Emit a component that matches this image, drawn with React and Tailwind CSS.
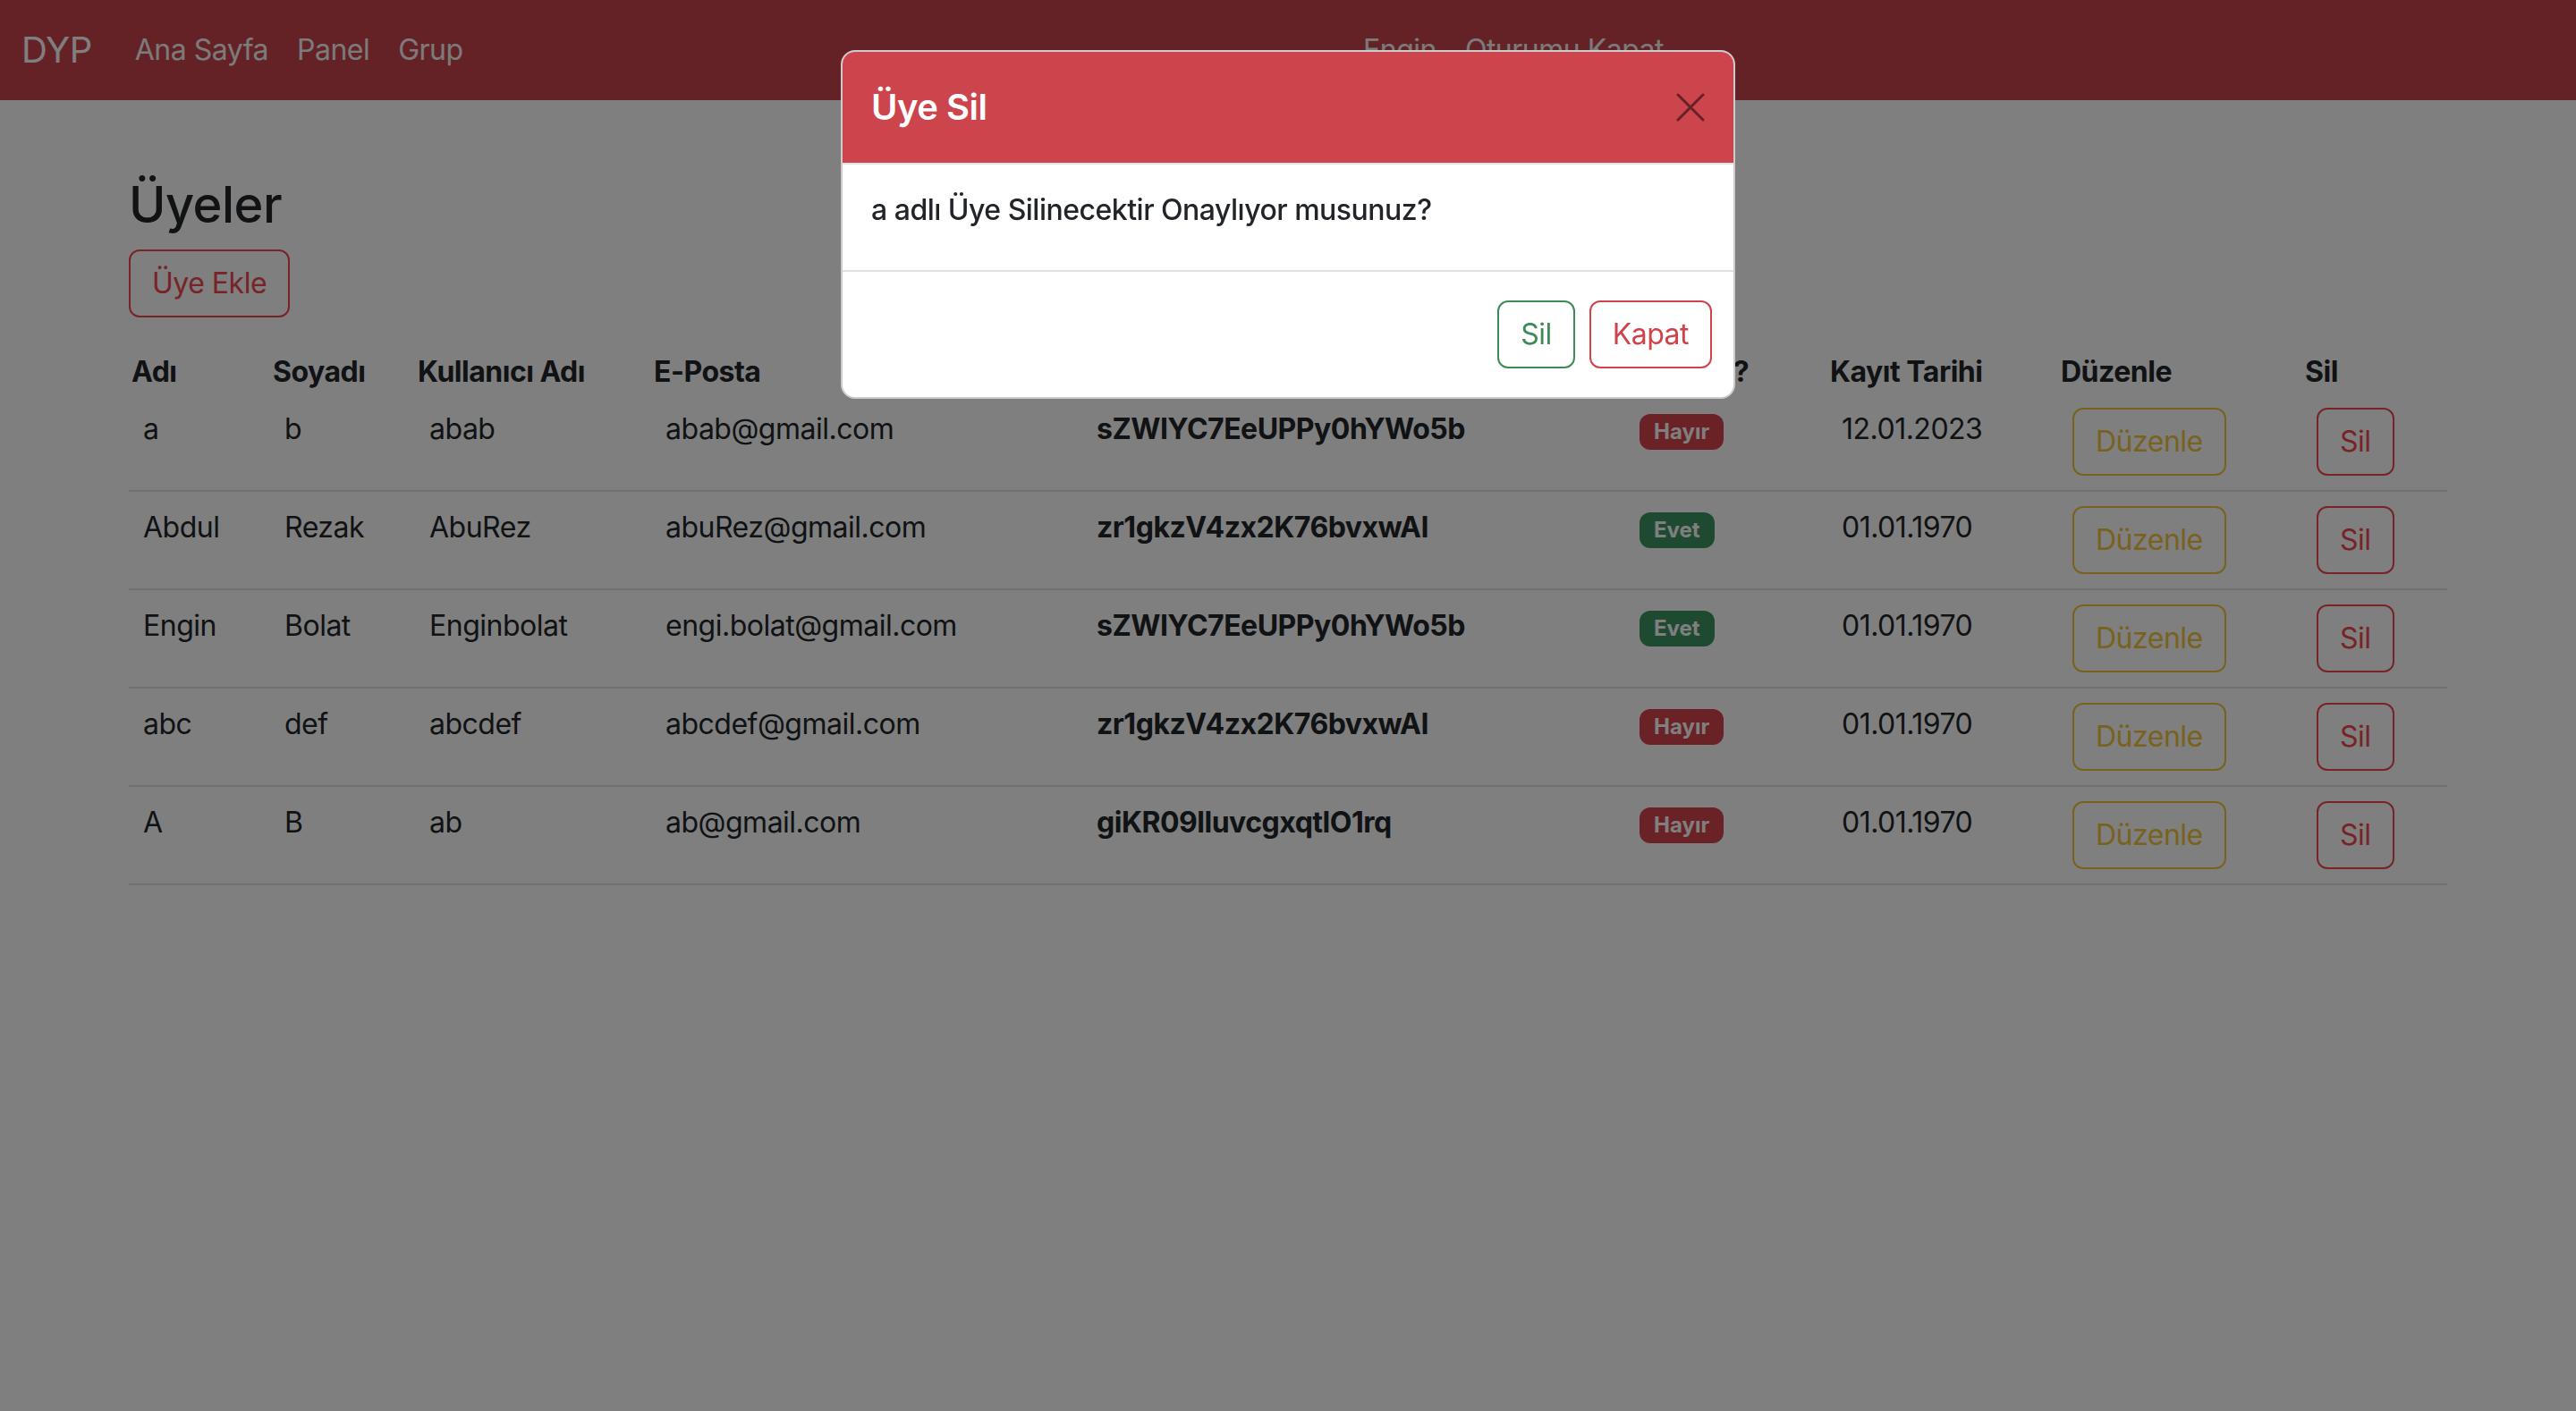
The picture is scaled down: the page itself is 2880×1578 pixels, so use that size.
import React from "react";

const rows = [
  ["a", "b", "abab", "abab@gmail.com", "sZWIYC7EeUPPy0hYWo5b", false, "12.01.2023"],
  ["Abdul", "Rezak", "AbuRez", "abuRez@gmail.com", "zr1gkzV4zx2K76bvxwAI", true, "01.01.1970"],
  ["Engin", "Bolat", "Enginbolat", "engi.bolat@gmail.com", "sZWIYC7EeUPPy0hYWo5b", true, "01.01.1970"],
  ["abc", "def", "abcdef", "abcdef@gmail.com", "zr1gkzV4zx2K76bvxwAI", false, "01.01.1970"],
  ["A", "B", "ab", "ab@gmail.com", "giKR09lluvcgxqtlO1rq", false, "01.01.1970"],
];

const headers = [
  ["Adı", "w-[158px]"],
  ["Soyadı", "w-[162px]"],
  ["Kullanıcı Adı", "w-[264px]"],
  ["E-Posta", "w-[482px]"],
  ["Şifre", "w-[607px]"],
  ["Aktif Mi?", "w-[226px]"],
  ["Kayıt Tarihi", "w-[258px]"],
  ["Düzenle", "w-[273px]"],
  ["Sil", "w-[162px]"],
];

export default function App() {
  return (
    <div className="relative min-h-[1578px] bg-white font-[Inter,sans-serif] tracking-[-0.5px] text-[#212529]">
      {/* Navbar */}
      <nav className="flex h-[112px] items-center bg-[#ca444c] px-[24px]">
        <div className="flex w-[1484px] items-center">
          <span className="mr-[32px] text-[40px] leading-[60px] text-white">DYP</span>
          <span className="px-[16px] text-[32px] leading-[48px] text-[#f6f6f6]">Ana Sayfa</span>
          <span className="px-[16px] text-[32px] leading-[48px] text-[#f6f6f6]">Panel</span>
          <span className="px-[16px] text-[32px] leading-[48px] text-[#f6f6f6]">Grup</span>
        </div>
        <div className="flex items-center">
          <span className="px-[16px] text-[32px] leading-[48px] text-[#f6f6f6]">Engin</span>
          <span className="px-[16px] text-[32px] leading-[48px] text-[#f6f6f6]">Oturumu Kapat</span>
        </div>
      </nav>

      {/* Content */}
      <main className="px-[144px] pt-[84px]">
        <h3 className="mb-[16px] text-[56px] font-medium leading-[67px]">Üyeler</h3>
        <button className="rounded-[12px] border-2 border-[#ef4650] px-[24px] py-[12px] text-[32px] leading-[48px] text-[#ef4650]">
          Üye Ekle
        </button>

        <table className="mt-[37px] w-[2592px] table-fixed border-collapse text-[32px] leading-[48px]">
          <thead>
            <tr>
              {headers.map(([h, w]) => (
                <th key={h} className={`${w} h-[48px] p-0 pl-[3px] text-left align-top font-bold`}>
                  {h}
                </th>
              ))}
            </tr>
          </thead>
          <tbody>
            {rows.map((r, i) => (
              <tr key={i} className="border-b-2 border-[#dee2e6]">
                <td className="px-[16px] py-[16px] align-top">{r[0]}</td>
                <td className="px-[16px] py-[16px] align-top">{r[1]}</td>
                <td className="px-[16px] py-[16px] align-top">{r[2]}</td>
                <td className="px-[16px] py-[16px] align-top">{r[3]}</td>
                <td className="px-[16px] py-[16px] align-top font-bold">{r[4]}</td>
                <td className="px-[16px] py-[16px] align-top">
                  {r[5] ? (
                    <span className="inline-block rounded-[12px] bg-[#3e9464] px-[16px] py-[8px] text-[24px] font-bold leading-[24px] tracking-normal text-white">
                      Evet
                    </span>
                  ) : (
                    <span className="inline-block rounded-[12px] bg-[#d4444c] px-[16px] py-[8px] text-[24px] font-bold leading-[24px] tracking-normal text-white">
                      Hayır
                    </span>
                  )}
                </td>
                <td className="px-[16px] py-[16px] align-top">{r[6]}</td>
                <td className="px-[16px] py-[16px] align-top">
                  <button className="rounded-[12px] border-2 border-[#f2c23c] px-[24px] py-[12px] text-[32px] leading-[48px] text-[#f2c23c]">
                    Düzenle
                  </button>
                </td>
                <td className="px-[16px] py-[16px] align-top">
                  <button className="rounded-[12px] border-2 border-[#ef4650] px-[24px] py-[12px] text-[32px] leading-[48px] text-[#ef4650]">
                    Sil
                  </button>
                </td>
              </tr>
            ))}
          </tbody>
        </table>
      </main>

      {/* Backdrop */}
      <div className="fixed inset-0 bg-black/50" />

      {/* Modal */}
      <div className="absolute left-[940px] top-[56px] w-[1000px] overflow-hidden rounded-[16px] border-2 border-black/20 bg-white">
        <div className="flex items-center justify-between border-b-2 border-[#dee2e6] bg-[#cc444c] p-[32px]">
          <h5 className="text-[40px] font-semibold leading-[60px] text-white">Üye Sil</h5>
          <button className="flex h-[60px] w-[32px] items-center justify-center">
            <svg width="32" height="32" viewBox="0 0 32 32" fill="none">
              <path d="M2 2L30 30M30 2L2 30" stroke="#652226" strokeWidth="3" strokeLinecap="round" />
            </svg>
          </button>
        </div>
        <div className="p-[32px]">
          <h6 className="mb-[16px] text-[32px] font-medium leading-[38.4px]">
            a adlı Üye Silinecektir Onaylıyor musunuz?
          </h6>
        </div>
        <div className="flex items-center justify-end gap-[16px] border-t-2 border-[#dee2e6] px-[24px] py-[32px]">
          <button className="rounded-[12px] border-2 border-[#3d8b57] px-[24px] py-[12px] text-[32px] leading-[48px] text-[#3d8b57]">
            Sil
          </button>
          <button className="rounded-[12px] border-2 border-[#d0434b] px-[24px] py-[12px] text-[32px] leading-[48px] text-[#d0434b]">
            Kapat
          </button>
        </div>
      </div>
    </div>
  );
}
